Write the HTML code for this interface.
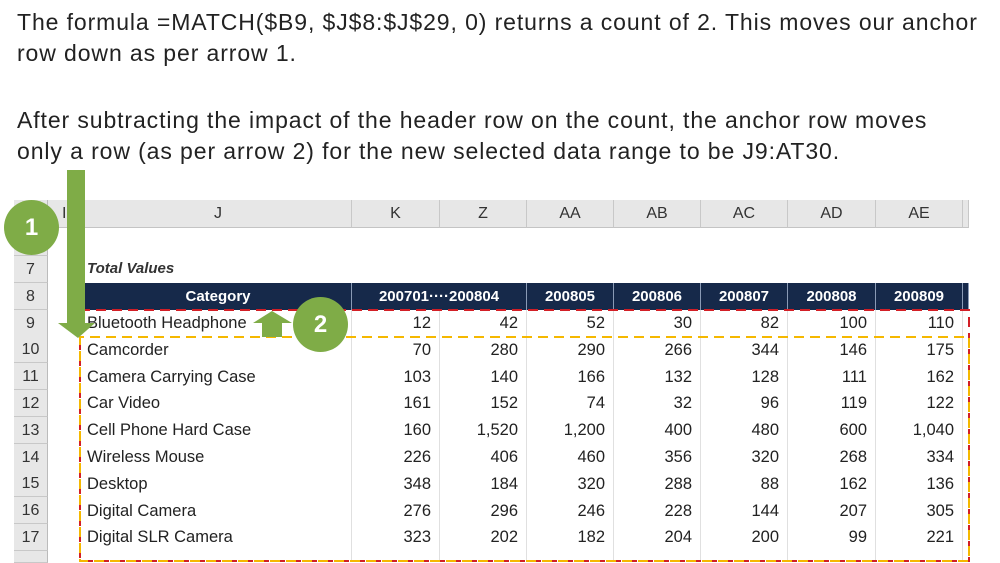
<!DOCTYPE html>
<html><head><meta charset="utf-8"><style>
*{margin:0;padding:0;box-sizing:border-box}
body{width:1000px;height:563px;background:#fff;position:relative;overflow:hidden;font-family:"Liberation Sans",sans-serif}
.t{position:absolute;left:17px;font-size:23px;color:#222;white-space:nowrap;letter-spacing:0.9px}
.a{position:absolute}
.ch{position:absolute;top:200px;height:28px;background:#e7e7e7;border-right:1px solid #c8c8c8;border-bottom:1px solid #c4c4c4;font-size:16px;color:#333;text-align:center;line-height:28px}
.rh{position:absolute;left:14px;width:34px;height:27px;background:#e7e7e7;border-bottom:1px solid #c8c8c8;border-right:1px solid #bbb;font-size:16px;color:#333;text-align:center;line-height:27px}
.cell{position:absolute;height:27px;line-height:27px;font-size:16.5px;color:#222;border-right:1px solid #e0e0e0;white-space:nowrap}
.num{text-align:right;padding-right:8px}
.hd{position:absolute;top:283px;height:27px;line-height:27px;background:#16294a;color:#fff;font-weight:bold;font-size:15px;text-align:center;border-right:1px solid #8a9ab5}
.circ{position:absolute;width:55px;height:55px;border-radius:50%;background:#7fac47;color:#fff;font-weight:bold;font-size:24px;text-align:center;line-height:55px}
</style></head><body>
<div class="t" style="top:9px">The formula =MATCH($B9, $J$8:$J$29, 0) returns a count of 2. This moves our anchor</div>
<div class="t" style="top:40px">row down as per arrow 1.</div>
<div class="t" style="top:107px">After subtracting the impact of the header row on the count, the anchor row moves</div>
<div class="t" style="top:138px">only a row (as per arrow 2) for the new selected data range to be J9:AT30.</div>

<div class="a" style="left:14px;top:200px;width:34px;height:28px;background:#e7e7e7;border-right:1px solid #bbb;border-bottom:1px solid #c4c4c4"></div>
<div class="a" style="left:14px;top:228px;width:34px;height:28px;background:#e7e7e7;border-right:1px solid #bbb;border-bottom:1px solid #c8c8c8"></div>
<div class="ch" style="left:48px;width:37px;text-align:left;padding-left:14px">I</div>
<div class="ch" style="left:85px;width:267px">J</div>
<div class="ch" style="left:352px;width:88px">K</div>
<div class="ch" style="left:440px;width:87px">Z</div>
<div class="ch" style="left:527px;width:87px">AA</div>
<div class="ch" style="left:614px;width:87px">AB</div>
<div class="ch" style="left:701px;width:87px">AC</div>
<div class="ch" style="left:788px;width:88px">AD</div>
<div class="ch" style="left:876px;width:87px">AE</div>
<div class="ch" style="left:963px;width:6px"></div>

<div class="a" style="left:87px;top:260px;font-size:15px;font-weight:bold;font-style:italic;color:#333">Total Values</div>
<div class="hd" style="left:85px;width:267px">Category</div>
<div class="hd" style="left:352px;width:175px;text-align:center">200701····200804</div>
<div class="hd" style="left:527px;width:87px">200805</div>
<div class="hd" style="left:614px;width:87px">200806</div>
<div class="hd" style="left:701px;width:87px">200807</div>
<div class="hd" style="left:788px;width:88px">200808</div>
<div class="hd" style="left:876px;width:87px">200809</div>
<div class="hd" style="left:963px;width:6px"></div>

<div id="rows"></div>
<script>
(function(){
var rows=[["Bluetooth Headphone",12,42,52,30,82,100,110],["Camcorder",70,280,290,266,344,146,175],["Camera Carrying Case",103,140,166,132,128,111,162],["Car Video",161,152,74,32,96,119,122],["Cell Phone Hard Case",160,"1,520","1,200",400,480,600,"1,040"],["Wireless Mouse",226,406,460,356,320,268,334],["Desktop",348,184,320,288,88,162,136],["Digital Camera",276,296,246,228,144,207,305],["Digital SLR Camera",323,202,182,204,200,99,221]];
var L=[352,440,527,614,701,788,876],W=[88,87,87,87,87,88,87];
var h='';
for(var r=7;r<=17;r++){var y=256+(r-7)*26.8;h+='<div class="rh" style="top:'+y+'px">'+r+'</div>';}
h+='<div class="rh" style="top:551px;height:12px"></div>';
rows.forEach(function(d,i){var y=310+i*26.8;
h+='<div class="cell" style="left:85px;width:267px;top:'+y+'px;padding-left:2px">'+d[0]+'</div>';
for(var c=0;c<7;c++)h+='<div class="cell num" style="left:'+L[c]+'px;width:'+W[c]+'px;top:'+y+'px">'+d[c+1]+'</div>';});
h+='<div class="cell" style="left:85px;width:267px;top:551px;height:10px"></div>';
for(var c=0;c<7;c++)h+='<div class="cell" style="left:'+L[c]+'px;width:'+W[c]+'px;top:551px;height:10px"></div>';
document.getElementById('rows').innerHTML=h;
})();
</script>

<svg class="a" style="left:0;top:0" width="1000" height="563">
<rect x="80" y="310" width="889" height="251" fill="none" stroke="#d21f26" stroke-width="2" stroke-dasharray="10 6"/>
<rect x="80" y="337" width="889" height="224" fill="none" stroke="#f5b800" stroke-width="2" stroke-dasharray="10 6" stroke-dashoffset="6"/>
<rect x="67" y="170" width="18" height="154" fill="#7fac47"/>
<polygon points="58,323 95,323 78,338" fill="#7fac47"/>
<rect x="262" y="322" width="20" height="15" fill="#7fac47"/>
<polygon points="253,323 292,323 272,311" fill="#7fac47"/>
</svg>
<div class="circ" style="left:4px;top:200px">1</div>
<div class="circ" style="left:293px;top:297px">2</div>
</body></html>
